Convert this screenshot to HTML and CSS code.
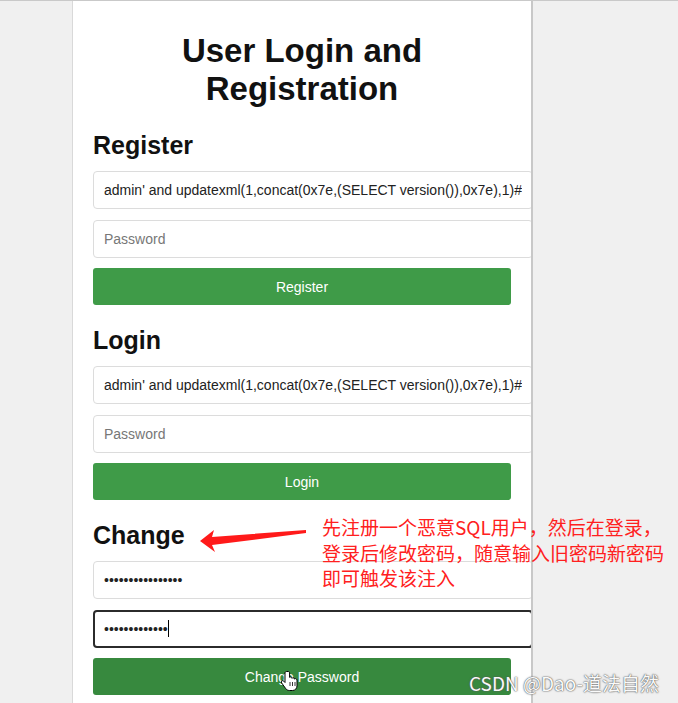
FILE: index.html
```html
<!DOCTYPE html>
<html lang="en">
<head>
<meta charset="utf-8">
<title>User Login and Registration</title>
<link rel="stylesheet" href="styles.css">
</head>
<body>
<div class="page">
  <div class="card">
    <h1 class="title">User Login and Registration</h1>

    <section class="block">
      <h2 class="block-title">Register</h2>
      <input class="field" type="text" value="admin' and updatexml(1,concat(0x7e,(SELECT version()),0x7e),1)#">
      <input class="field" type="password" placeholder="Password">
      <button class="btn">Register</button>
    </section>

    <section class="block">
      <h2 class="block-title">Login</h2>
      <input class="field" type="text" value="admin' and updatexml(1,concat(0x7e,(SELECT version()),0x7e),1)#">
      <input class="field" type="password" placeholder="Password">
      <button class="btn">Login</button>
    </section>

    <section class="block">
      <h2 class="block-title">Change</h2>
      <input class="field" type="password" value="1234567890123456">
      <div class="field-wrap">
        <input class="field field-focus" type="password" value="1234567890123">
        <span class="caret"></span>
      </div>
      <button class="btn btn-hover">Change Password</button>
    </section>
  </div>

  <svg class="arrow" width="120" height="30" viewBox="0 0 120 30">
    <polygon points="2,16 16,5 14,12 108,5 108,8 14,20 17,27" fill="#ff1a1a"/>
  </svg>

  <div class="note">先注册一个恶意SQL用户，然后在登录，<br>登录后修改密码，随意输入旧密码新密码<br>即可触发该注入</div>

  <svg class="cursor" width="18" height="22" viewBox="0 0 18 22">
    <path d="M5.5 1.5c-.9 0-1.5.7-1.5 1.5v9.5l-1.2-1.3c-.7-.7-1.7-.7-2.2 0-.4.5-.3 1.2.1 1.8l3.8 5.3c.9 1.4 2.3 2.2 4 2.2h3c2.6 0 4.5-2 4.5-4.6V10c0-.8-.6-1.4-1.4-1.4-.5 0-.9.2-1.1.5 0-.8-.6-1.4-1.4-1.4-.5 0-.9.2-1.1.6-.1-.8-.7-1.3-1.4-1.3-.4 0-.8.2-1 .4V3c0-.8-.6-1.5-1.5-1.5z" fill="#fff" stroke="#000" stroke-width="1"/>
    <path d="M9 12v4M11.5 12v4M14 12v4" stroke="#000" stroke-width="0.8"/>
  </svg>

  <div class="watermark">CSDN @Dao-道法自然</div>
</div>
</body>
</html>
```

FILE: styles.css
```css
html, body {
  margin: 0;
  padding: 0;
}

body {
  background: #f0f0f0;
  font-family: "Liberation Sans", Arial, sans-serif;
  border-top: 1px solid #c9c9c9;
  height: 702px;
  overflow: hidden;
}

.page {
  position: relative;
  height: 100%;
}

.card {
  margin-left: 72px;
  width: 418px;
  padding: 31px 20px 0 20px;
  background: #fff;
  border-left: 1px solid #d9d9d9;
  border-right: 2px solid #c8c8c8;
  height: 671px;
  overflow: hidden;
}

.title {
  margin: 0 0 23px 0;
  font-size: 33px;
  line-height: 38px;
  font-weight: bold;
  text-align: center;
  color: #111;
}

.block {
  display: flex;
  flex-direction: column;
  margin-bottom: 21px;
}

.block-title {
  margin: 0 0 12px 0;
  font-size: 25px;
  line-height: 28px;
  font-weight: bold;
  color: #111;
}

.field {
  display: block;
  width: 100%;
  box-sizing: content-box;
  padding: 0 10px;
  height: 36px;
  margin: 0 0 11px 0;
  border: 1px solid #dcdcdc;
  border-radius: 4px;
  font-family: "Liberation Sans", Arial, sans-serif;
  font-size: 14px;
  color: #222;
  background: #fff;
  outline: none;
}

.field::placeholder {
  color: #777;
}

.field-wrap {
  position: relative;
  margin-bottom: 11px;
}

.field-wrap .field {
  margin: 0;
}

.field-focus {
  border: 2px solid #2b2b2b;
  height: 34px;
  padding: 0 9px;
  border-radius: 4px;
}

.caret {
  position: absolute;
  left: 75px;
  top: 10px;
  width: 1px;
  height: 17px;
  background: #000;
}

.btn {
  display: block;
  width: 100%;
  height: 37px;
  margin-top: -1px;
  border: none;
  border-radius: 3px;
  background: #3f9b48;
  color: #fff;
  font-family: "Liberation Sans", Arial, sans-serif;
  font-size: 14px;
  cursor: pointer;
}

.btn-hover {
  background: #37893e;
}

.arrow {
  position: absolute;
  left: 198px;
  top: 524px;
}

.note {
  position: absolute;
  left: 322px;
  top: 513px;
  font-family: "Noto Sans CJK SC", "Liberation Sans", sans-serif;
  font-size: 19px;
  line-height: 25.5px;
  color: #ff2020;
  white-space: nowrap;
}

.cursor {
  position: absolute;
  left: 281px;
  top: 669px;
}

.watermark {
  position: absolute;
  left: 469px;
  top: 669px;
  font-family: "Noto Sans CJK SC", "Liberation Sans", sans-serif;
  font-size: 19px;
  line-height: 26px;
  color: #fafafa;
  text-shadow: 0 0 1px #444, 0 0 2px #666;
  white-space: nowrap;
}
```
